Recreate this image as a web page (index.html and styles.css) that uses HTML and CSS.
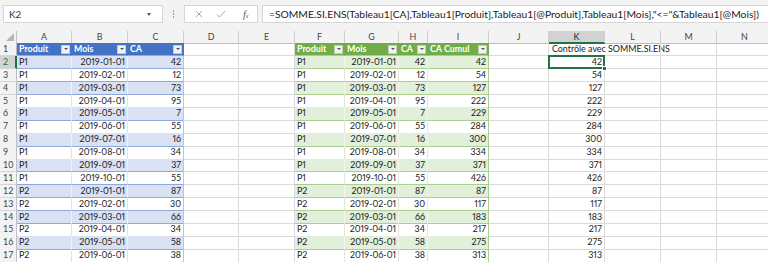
FILE: index.html
```html
<!DOCTYPE html>
<html lang="fr">
<head>
<meta charset="utf-8">
<title>Excel</title>
<link rel="stylesheet" href="styles.css">
</head>
<body>
<div class="top">
  <div class="namebox"><span>K2</span><span class="tri"></span></div>
  <div class="dots"><i></i><i></i><i></i></div>
  <div class="fxbox">
    <svg class="ic" width="8" height="8" viewBox="0 0 8 8"><path d="M1 1L7 7M7 1L1 7" stroke="#a6a6a6" stroke-width="1" fill="none"/></svg>
    <svg class="ic" width="10" height="8" viewBox="0 0 10 8"><path d="M1 4.5L3.5 7L9 1" stroke="#a6a6a6" stroke-width="1" fill="none"/></svg>
    <span class="fx">f<small>x</small></span>
  </div>
  <div class="formula">=SOMME.SI.ENS(Tableau1[CA],Tableau1[Produit],Tableau1[@Produit],Tableau1[Mois],"&lt;="&amp;Tableau1[@Mois])</div>
</div>
<div class="sheet">
  <div class="r colh">
    <div class="corner"><svg width="8" height="8" viewBox="0 0 8 8"><path d="M8 0V8H0Z" fill="#b7b7b7"/></svg></div>
    <div class="ch">A</div><div class="ch">B</div><div class="ch">C</div><div class="ch">D</div><div class="ch">E</div><div class="ch">F</div><div class="ch">G</div><div class="ch">H</div><div class="ch">I</div><div class="ch">J</div><div class="ch sel">K</div><div class="ch">L</div><div class="ch">M</div><div class="ch">N</div>
  </div>
  <div class="r">
    <div class="h">1</div>
    <div class="c hb">Produit<span class="dd"></span></div><div class="c hb">Mois<span class="dd"></span></div><div class="c hb">CA<span class="dd"></span></div>
    <div class="c"></div><div class="c"></div>
    <div class="c hg">Produit<span class="dd"></span></div><div class="c hg">Mois<span class="dd"></span></div><div class="c hg">CA<span class="dd"></span></div><div class="c hg">CA Cumul<span class="dd"></span></div>
    <div class="c"></div><div class="c over">Contrôle avec SOMME.SI.ENS</div><div class="c"></div><div class="c"></div><div class="c"></div>
  </div>
  <div class="r">
    <div class="h hsel">2</div>
    <div class="c a s">P1</div><div class="c a s n">2019-01-01</div><div class="c a s n e">42</div>
    <div class="c"></div><div class="c"></div>
    <div class="c g s">P1</div><div class="c g s n">2019-01-01</div><div class="c g s n">42</div><div class="c g s n e">42</div>
    <div class="c"></div><div class="c n active">42<span class="handle"></span></div><div class="c"></div><div class="c"></div><div class="c"></div>
  </div>
  <div class="r">
    <div class="h">3</div>
    <div class="c a">P1</div><div class="c a n">2019-02-01</div><div class="c a n e">12</div>
    <div class="c"></div><div class="c"></div>
    <div class="c g">P1</div><div class="c g n">2019-02-01</div><div class="c g n">12</div><div class="c g n e">54</div>
    <div class="c"></div><div class="c n">54</div><div class="c"></div><div class="c"></div><div class="c"></div>
  </div>
  <div class="r">
    <div class="h">4</div>
    <div class="c a s">P1</div><div class="c a s n">2019-03-01</div><div class="c a s n e">73</div>
    <div class="c"></div><div class="c"></div>
    <div class="c g s">P1</div><div class="c g s n">2019-03-01</div><div class="c g s n">73</div><div class="c g s n e">127</div>
    <div class="c"></div><div class="c n">127</div><div class="c"></div><div class="c"></div><div class="c"></div>
  </div>
  <div class="r">
    <div class="h">5</div>
    <div class="c a">P1</div><div class="c a n">2019-04-01</div><div class="c a n e">95</div>
    <div class="c"></div><div class="c"></div>
    <div class="c g">P1</div><div class="c g n">2019-04-01</div><div class="c g n">95</div><div class="c g n e">222</div>
    <div class="c"></div><div class="c n">222</div><div class="c"></div><div class="c"></div><div class="c"></div>
  </div>
  <div class="r">
    <div class="h">6</div>
    <div class="c a s">P1</div><div class="c a s n">2019-05-01</div><div class="c a s n e">7</div>
    <div class="c"></div><div class="c"></div>
    <div class="c g s">P1</div><div class="c g s n">2019-05-01</div><div class="c g s n">7</div><div class="c g s n e">229</div>
    <div class="c"></div><div class="c n">229</div><div class="c"></div><div class="c"></div><div class="c"></div>
  </div>
  <div class="r">
    <div class="h">7</div>
    <div class="c a">P1</div><div class="c a n">2019-06-01</div><div class="c a n e">55</div>
    <div class="c"></div><div class="c"></div>
    <div class="c g">P1</div><div class="c g n">2019-06-01</div><div class="c g n">55</div><div class="c g n e">284</div>
    <div class="c"></div><div class="c n">284</div><div class="c"></div><div class="c"></div><div class="c"></div>
  </div>
  <div class="r">
    <div class="h">8</div>
    <div class="c a s">P1</div><div class="c a s n">2019-07-01</div><div class="c a s n e">16</div>
    <div class="c"></div><div class="c"></div>
    <div class="c g s">P1</div><div class="c g s n">2019-07-01</div><div class="c g s n">16</div><div class="c g s n e">300</div>
    <div class="c"></div><div class="c n">300</div><div class="c"></div><div class="c"></div><div class="c"></div>
  </div>
  <div class="r">
    <div class="h">9</div>
    <div class="c a">P1</div><div class="c a n">2019-08-01</div><div class="c a n e">34</div>
    <div class="c"></div><div class="c"></div>
    <div class="c g">P1</div><div class="c g n">2019-08-01</div><div class="c g n">34</div><div class="c g n e">334</div>
    <div class="c"></div><div class="c n">334</div><div class="c"></div><div class="c"></div><div class="c"></div>
  </div>
  <div class="r">
    <div class="h">10</div>
    <div class="c a s">P1</div><div class="c a s n">2019-09-01</div><div class="c a s n e">37</div>
    <div class="c"></div><div class="c"></div>
    <div class="c g s">P1</div><div class="c g s n">2019-09-01</div><div class="c g s n">37</div><div class="c g s n e">371</div>
    <div class="c"></div><div class="c n">371</div><div class="c"></div><div class="c"></div><div class="c"></div>
  </div>
  <div class="r">
    <div class="h">11</div>
    <div class="c a">P1</div><div class="c a n">2019-10-01</div><div class="c a n e">55</div>
    <div class="c"></div><div class="c"></div>
    <div class="c g">P1</div><div class="c g n">2019-10-01</div><div class="c g n">55</div><div class="c g n e">426</div>
    <div class="c"></div><div class="c n">426</div><div class="c"></div><div class="c"></div><div class="c"></div>
  </div>
  <div class="r">
    <div class="h">12</div>
    <div class="c a s">P2</div><div class="c a s n">2019-01-01</div><div class="c a s n e">87</div>
    <div class="c"></div><div class="c"></div>
    <div class="c g s">P2</div><div class="c g s n">2019-01-01</div><div class="c g s n">87</div><div class="c g s n e">87</div>
    <div class="c"></div><div class="c n">87</div><div class="c"></div><div class="c"></div><div class="c"></div>
  </div>
  <div class="r">
    <div class="h">13</div>
    <div class="c a">P2</div><div class="c a n">2019-02-01</div><div class="c a n e">30</div>
    <div class="c"></div><div class="c"></div>
    <div class="c g">P2</div><div class="c g n">2019-02-01</div><div class="c g n">30</div><div class="c g n e">117</div>
    <div class="c"></div><div class="c n">117</div><div class="c"></div><div class="c"></div><div class="c"></div>
  </div>
  <div class="r">
    <div class="h">14</div>
    <div class="c a s">P2</div><div class="c a s n">2019-03-01</div><div class="c a s n e">66</div>
    <div class="c"></div><div class="c"></div>
    <div class="c g s">P2</div><div class="c g s n">2019-03-01</div><div class="c g s n">66</div><div class="c g s n e">183</div>
    <div class="c"></div><div class="c n">183</div><div class="c"></div><div class="c"></div><div class="c"></div>
  </div>
  <div class="r">
    <div class="h">15</div>
    <div class="c a">P2</div><div class="c a n">2019-04-01</div><div class="c a n e">34</div>
    <div class="c"></div><div class="c"></div>
    <div class="c g">P2</div><div class="c g n">2019-04-01</div><div class="c g n">34</div><div class="c g n e">217</div>
    <div class="c"></div><div class="c n">217</div><div class="c"></div><div class="c"></div><div class="c"></div>
  </div>
  <div class="r">
    <div class="h">16</div>
    <div class="c a s">P2</div><div class="c a s n">2019-05-01</div><div class="c a s n e">58</div>
    <div class="c"></div><div class="c"></div>
    <div class="c g s">P2</div><div class="c g s n">2019-05-01</div><div class="c g s n">58</div><div class="c g s n e">275</div>
    <div class="c"></div><div class="c n">275</div><div class="c"></div><div class="c"></div><div class="c"></div>
  </div>
  <div class="r">
    <div class="h">17</div>
    <div class="c a">P2</div><div class="c a n">2019-06-01</div><div class="c a n e">38</div>
    <div class="c"></div><div class="c"></div>
    <div class="c g">P2</div><div class="c g n">2019-06-01</div><div class="c g n">38</div><div class="c g n e">313</div>
    <div class="c"></div><div class="c n">313</div><div class="c"></div><div class="c"></div><div class="c"></div>
  </div>
</div>
</body>
</html>
```
FILE: styles.css
```css
* { box-sizing: border-box; }
html, body { margin: 0; padding: 0; }
body {
  width: 768px;
  height: 262px;
  overflow: hidden;
  background: #fff;
  font-family: Lato, "Liberation Sans", sans-serif;
  font-size: 8.9px;
  color: #1a1a1a;
}
.top {
  height: 31px;
  background: #f3f3f3;
  display: flex;
  align-items: flex-start;
  padding-top: 5px;
}
.namebox {
  margin-left: 3px;
  width: 160px;
  height: 18px;
  background: #fff;
  border: 1px solid #d6d6d6;
  display: flex;
  align-items: center;
  justify-content: space-between;
  padding: 0 11px 0 5px;
  font-size: 9.8px;
  color: #333;
}
.tri {
  width: 0; height: 0;
  border-left: 2.5px solid transparent;
  border-right: 2.5px solid transparent;
  border-top: 3px solid #555;
}
.dots {
  width: 21px;
  height: 18px;
  display: flex;
  flex-direction: column;
  align-items: center;
  justify-content: center;
  gap: 1.5px;
}
.dots i { width: 1.5px; height: 1.5px; background: #9a9a9a; display: block; }
.fxbox {
  width: 74px;
  height: 18px;
  background: #fff;
  border: 1px solid #d6d6d6;
  display: flex;
  align-items: center;
  padding-left: 10px;
  gap: 13px;
}
.fx { font-family: "Liberation Serif", serif; font-style: italic; font-size: 10px; color: #555; margin-left: 4px; }
.fx small { font-size: 6px; }
.formula {
  flex: 1;
  margin-left: 4px;
  height: 18px;
  background: #fff;
  border: 1px solid #d6d6d6;
  border-right: none;
  padding-left: 6px;
  line-height: 16px;
  font-size: 10.3px;
  white-space: nowrap;
  overflow: hidden;
  color: #1a1a1a;
}
.sheet { width: 780px; }
.r {
  display: grid;
  grid-template-columns: 17px 55px 56px 56px 55px 56px 50px 54px 29px 61px 60px 56px 56px 56px 56px;
  height: 12.9px;
}
.colh { height: 12px; background: #f3f3f3; }
.corner {
  border-right: 1px solid #c6c6c6;
  border-bottom: 1px solid #bdbdbd;
  display: flex;
  align-items: flex-end;
  justify-content: flex-end;
  padding: 0 2px 2px 0;
}
.ch {
  border-right: 1px solid #d0d0d0;
  border-bottom: 1px solid #bdbdbd;
  text-align: center;
  line-height: 11px;
  color: #444;
}
.ch.sel { background: #d2d2d2; border-bottom: 2px solid #217346; color: #262626; }
.h {
  background: #f3f3f3;
  border-right: 1px solid #bdbdbd;
  border-bottom: 1px solid #d6d6d6;
  padding-left: 3px;
  line-height: 12px;
  color: #444;
}
.h.hsel { background: #d2d2d2; border-right: 2px solid #217346; color: #217346; }
.c {
  border-right: 1px solid #dadada;
  border-bottom: 1px solid #dadada;
  padding: 0 2px;
  line-height: 12.4px;
  white-space: nowrap;
  font-variant-numeric: proportional-nums;
}
.n { text-align: right; }
.hb, .hg {
  color: #fff;
  font-weight: bold;
  display: flex;
  align-items: center;
  justify-content: space-between;
  padding: 0 1px 0 2px;
}
.hb { background: #4472c4; border-color: #4472c4; border-bottom-color: #8ea9db; }
.hg { background: #70ad47; border-color: #70ad47; border-bottom-color: #a9d08e; }
.dd {
  width: 9px;
  height: 9px;
  background: #f2f2f2;
  border: 1px solid #c9c9c9;
  flex: none;
  display: flex;
  align-items: center;
  justify-content: center;
}
.dd::after {
  content: "";
  border-left: 2px solid transparent;
  border-right: 2px solid transparent;
  border-top: 2.5px solid #555;
}
.a { border-bottom-color: #8ea9db; border-right-color: #dde3f1; }
.a.s { background: #d9e1f2; border-right-color: #eef1f9; }
.a.e { border-right-color: #b4c6e7; }
.g { border-bottom-color: #a9d08e; border-right-color: #dfe8d8; }
.g.s { background: #e2efda; border-right-color: #f1f7ed; }
.g.e { border-right-color: #a9d08e; }
.over { overflow: visible; border-right-color: transparent; padding-left: 3px; }
.active { position: relative; }
.active::before {
  content: "";
  position: absolute;
  left: -1px; top: -1px; right: -1px; bottom: -1px;
  border: 2px solid #217346;
}
.handle {
  position: absolute;
  right: -3px;
  bottom: -3px;
  width: 5px;
  height: 5px;
  background: #217346;
  border: 1px solid #fff;
}
```
